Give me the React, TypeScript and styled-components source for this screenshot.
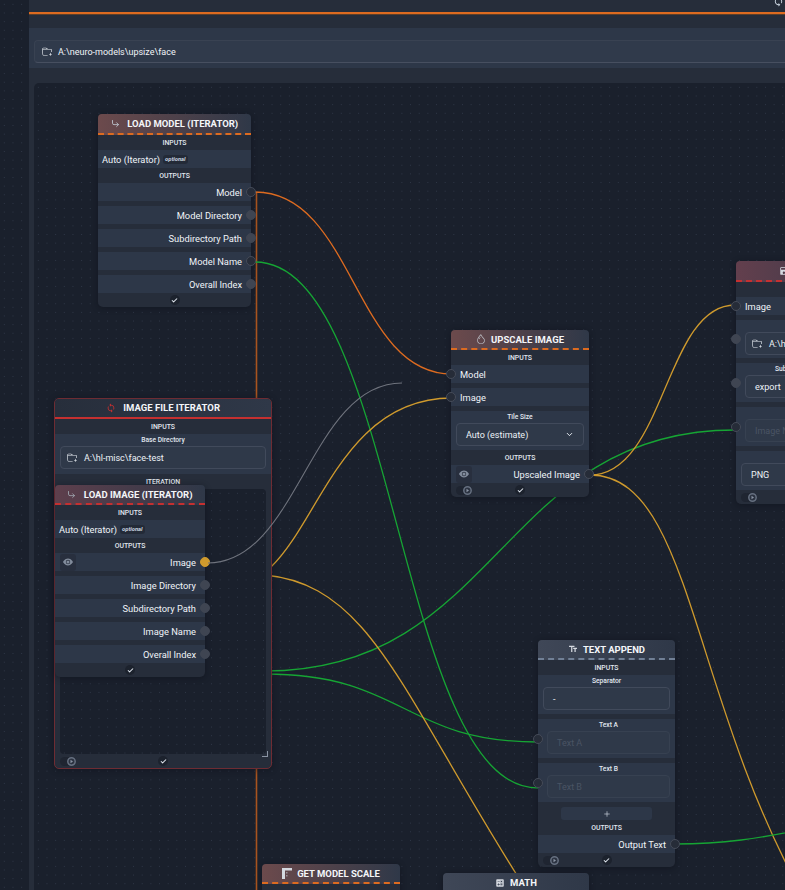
import React from "react";
import styled, { createGlobalStyle } from "styled-components";
import { BsEyeFill, BsFolderPlus, BsDroplet } from "react-icons/bs";
import { MdCalculate, MdLoop, MdSave, MdTextFields } from "react-icons/md";
import { Check, ChevronDown, CornerDownRight, Plus } from "lucide-react";

const ORANGE = "#dd6b20";
const RED = "#c53030";
const SLATE = "#718096";
const YELLOW = "#cf9a2d";
const GREEN = "#16a534";
const dots = "radial-gradient(circle at center, #2f3747 0.6px, transparent 0.9px)";

const GlobalStyle = createGlobalStyle`
  html, body { margin: 0; height: 100%; overflow: hidden; }
  body {
    background-color: #1a202c;
    background-image: ${dots};
    background-size: 8.66px 8.66px;
    font-family: Roboto, "Liberation Sans", sans-serif;
    color: #f0f4f8;
  }
`;

const Page = styled.div`
  height: 890px;
  width: 785px;
  padding-left: 29px;
  box-sizing: border-box;
  overflow: hidden;
`;

const OuterNode = styled.div`
  width: 756px;
  height: 890px;
  display: flex;
  flex-direction: column;
  background: #262d3a;
`;

const OuterTop = styled.div`
  height: 12px;
  overflow: hidden;
  display: flex;
  justify-content: flex-end;
  padding-right: 1px;
  color: #cbd5e0;
  svg { margin-top: -4px; }
`;

const OuterAccent = styled.div`
  height: 3px;
  box-sizing: border-box;
  background: ${ORANGE};
  border-bottom: 1px solid #5a3f2c;
`;

const OuterInputs = styled.div`
  margin-top: 13px;
  height: 40px;
  padding: 12px 0 5px 5px;
  box-sizing: border-box;
  background: #2d3748;
`;

const OuterGap = styled.div`
  height: 15px;
`;

const Canvas = styled.div`
  position: relative;
  flex: 1;
  margin-left: 5px;
  overflow: hidden;
  border-radius: 5px 0 0 0;
  background-color: #1a202c;
  background-image: ${dots};
  background-size: 8.66px 8.66px;
`;

const WireLayer = styled.svg<{ $top?: boolean }>`
  position: absolute;
  inset: 0;
  width: 100%;
  height: 100%;
  z-index: ${(p) => (p.$top ? 3 : 0)};
  pointer-events: none;
`;

const Wire = styled.path<{ $color: string; $width?: number }>`
  fill: none;
  stroke: ${(p) => p.$color};
  stroke-width: ${(p) => p.$width ?? 1.3};
`;

const NodeShell = styled.div<{ $x: number; $y: number; $w: number; $h?: number }>`
  position: absolute;
  left: ${(p) => p.$x}px;
  top: ${(p) => p.$y}px;
  width: ${(p) => p.$w}px;
  ${(p) => (p.$h ? `height: ${p.$h}px;` : "")}
  z-index: 1;
  display: flex;
  flex-direction: column;
  box-sizing: border-box;
  background: #262d3a;
  border-radius: 5px;
  box-shadow: 0 1px 6px rgba(10, 14, 22, 0.45);
`;

const IteratorShell = styled(NodeShell)`
  border: 1px solid #6e2c33;
`;

const Header = styled.div<{ $tint: string; $accent: string; $solid?: boolean; $h?: number }>`
  height: ${(p) => p.$h ?? 20}px;
  flex: none;
  box-sizing: border-box;
  display: flex;
  align-items: center;
  justify-content: center;
  gap: 5px;
  padding-bottom: ${(p) => (p.$solid ? 1 : 0)}px;
  border-radius: 4px 4px 0 0;
  background: linear-gradient(90deg, ${(p) => p.$tint}, #2f3848);
  border-bottom: 2px ${(p) => (p.$solid ? "solid" : "dashed")} ${(p) => p.$accent};
  font-size: 9.5px;
  font-weight: 700;
  white-space: nowrap;
  color: #f4f6f9;
  svg { flex: none; }
`;

const SectionLabel = styled.div`
  height: 15px;
  flex: none;
  display: flex;
  align-items: center;
  justify-content: center;
  font-size: 6.9px;
  font-weight: 500;
  color: #e2e8f0;
`;

const Rows = styled.div`
  display: flex;
  flex-direction: column;
  gap: 5px;
`;

const HandleRow = styled.div<{ $align?: "left" | "right" }>`
  position: relative;
  height: 18px;
  display: flex;
  align-items: center;
  justify-content: ${(p) => (p.$align === "right" ? "flex-end" : "flex-start")};
  padding: 0 ${(p) => (p.$align === "right" ? 9 : 4)}px 0 ${(p) => (p.$align === "right" ? 5 : 9)}px;
  background: #2d3748;
  font-size: 9.3px;
  white-space: nowrap;
`;

const PlainRow = styled(HandleRow)`
  padding: 0 0 0 4px;
  gap: 3px;
`;

const FieldRow = styled.div<{ $pad?: number; $h?: number }>`
  position: relative;
  height: ${(p) => p.$h ?? 39}px;
  display: flex;
  flex-direction: column;
  padding: 0 5px 0 ${(p) => p.$pad ?? 5}px;
  box-sizing: border-box;
  background: #2d3748;
`;

const FieldLabel = styled.div`
  height: 12px;
  flex: none;
  display: flex;
  align-items: center;
  justify-content: center;
  gap: 4px;
  font-size: 6.7px;
  font-weight: 500;
  white-space: nowrap;
  color: #e2e8f0;
`;

const TextField = styled.div<{ $dim?: boolean }>`
  height: 23px;
  flex: none;
  box-sizing: border-box;
  display: flex;
  align-items: center;
  gap: 7px;
  padding: 0 9px;
  border: 1px solid ${(p) => (p.$dim ? "#374151" : "#414a5b")};
  border-radius: 4px;
  font-size: 9px;
  white-space: nowrap;
  overflow: hidden;
  background: #2f3949;
  color: ${(p) => (p.$dim ? "#4a5464" : "#edf2f7")};
  svg { flex: none; }
`;

const FolderField = styled(TextField)`
  padding: 0 6px;
`;

const PathBar = styled(TextField)`
  border-radius: 4px 0 0 4px;
  border-width: 1px 0 1px 1px;
  border-color: #394252 #394252 #474f60;
  padding-left: 7px;
  gap: 6px;
  background: #303a4b;
  color: #f0f4f8;
`;

const SelectField = styled(TextField)`
  justify-content: space-between;
  color: #edf2f7;
`;

const Port = styled.span<{ $side: "left" | "right"; $state?: "free" | "linked" | "image" }>`
  position: absolute;
  ${(p) => p.$side}: -5px;
  top: 50%;
  width: 10px;
  height: 10px;
  margin-top: -5px;
  box-sizing: border-box;
  border-radius: 50%;
  background: ${(p) => (p.$state === "image" ? YELLOW : p.$state === "linked" ? "#262c38" : "#3f4552")};
  border: 1px solid ${(p) => (p.$state === "image" ? YELLOW : p.$state === "linked" ? "#454b58" : "#3f4552")};
`;

const OptionalTag = styled.span`
  display: inline-flex;
  align-items: center;
  height: 9px;
  padding: 0 2px;
  border-radius: 3px;
  background: #232a37;
  font-size: 5.8px;
  font-style: italic;
  font-weight: 700;
  color: #cbd5e0;
`;

const EyeButton = styled.span`
  width: 16px;
  height: 17px;
  margin-right: auto;
  display: flex;
  align-items: center;
  justify-content: center;
  border-radius: 3px;
  background: #282f3e;
  color: #828c9c;
`;

const Footer = styled.div<{ $h?: number }>`
  height: ${(p) => p.$h ?? 14}px;
  flex: none;
  display: grid;
  grid-template-columns: 1fr auto 1fr;
  align-items: center;
  padding: 0 5px;
`;

const PlayToggle = styled.span`
  width: 16px;
  height: 9px;
  display: flex;
  align-items: center;
  justify-content: flex-end;
  border-radius: 5px;
  background: #1f2531;
`;

const CheckBadge = styled.span`
  grid-column: 2;
  width: 10px;
  height: 10px;
  display: flex;
  align-items: center;
  justify-content: center;
  border-radius: 50%;
  background: #1c222d;
  color: #e2e8f0;
`;

const InnerCanvas = styled.div`
  position: relative;
  flex: 1;
  margin: 0 5px 0 5px;
  border-radius: 4px;
  background-color: #1a202c;
  background-image: ${dots};
  background-size: 8.66px 8.66px;
`;

const ResizeCorner = styled.span`
  position: absolute;
  right: -2px;
  bottom: -3px;
  width: 5px;
  height: 5px;
  border-right: 1px solid #8a93a3;
  border-bottom: 1px solid #8a93a3;
`;

const NestedNode = styled(NodeShell)`
  z-index: 2;
`;

const AddButton = styled.div`
  height: 13px;
  margin: 5px 23px 0;
  display: flex;
  align-items: center;
  justify-content: center;
  border-radius: 3px;
  background: #2d3748;
  color: #cbd5e0;
`;

const PlayIcon = () => (
  <svg width="9" height="9" viewBox="0 0 9 9">
    <circle cx="4.5" cy="4.5" r="3.7" fill="#2b3240" stroke="#667080" strokeWidth="1.5" />
    <path d="M3.5 2.8 6 4.5 3.5 6.2z" fill="#8a94a3" />
  </svg>
);

const ScaleIcon = () => (
  <svg width="10" height="11" viewBox="0 0 10 11" fill="#d5d9e0">
    <path d="M0 0h10v2.5H3V11H0z" />
    <path d="M4 4h1.5v1.5H4zM4 7h1.5v1.5H4z" opacity="0.5" />
  </svg>
);

const NodeFooter = ({ play = true }: { play?: boolean }) => (
  <Footer>
    {play && (
      <PlayToggle>
        <PlayIcon />
      </PlayToggle>
    )}
    <CheckBadge>
      <Check size={7} strokeWidth={3.5} />
    </CheckBadge>
  </Footer>
);

const Output = ({ label, linked }: { label: string; linked?: boolean }) => (
  <HandleRow $align="right">
    {label}
    <Port $side="right" $state={linked ? "linked" : "free"} />
  </HandleRow>
);

const Eye = () => (
  <EyeButton>
    <BsEyeFill size={10} />
  </EyeButton>
);

const wires = [
  { d: "M256.5 192 V890", color: "#a8541f", width: 1.6 },
  { d: "M255 192 C354 192 354 374 452 374", color: ORANGE },
  { d: "M255 262 C397 262 397 788 538 788", color: GREEN },
  { d: "M271 567 C320 520 345 398 452 398", color: YELLOW },
  { d: "M265 671 C500 671 500 430 735 430", color: GREEN },
  { d: "M265 674 C404 674 404 742 538 742", color: GREEN },
  { d: "M265 575 C370 585 400 690 520 880", color: YELLOW },
  { d: "M590 475 C665 475 665 305 735 305", color: YELLOW },
  { d: "M590 475 C690 475 690 690 800 890", color: YELLOW },
  { d: "M675 844 C725 844 760 838 800 830", color: GREEN },
];

export default function App() {
  return (
    <Page>
      <GlobalStyle />
      <OuterNode>
        <OuterTop>
          <MdLoop size={11} />
        </OuterTop>
        <OuterAccent />
        <OuterInputs>
          <PathBar>
            <BsFolderPlus size={10} />
            A:\neuro-models\upsize\face
          </PathBar>
        </OuterInputs>
        <OuterGap />
        <Canvas>
          <WireLayer viewBox="34 83 751 807">
            {wires.map((w) => (
              <Wire key={w.d} d={w.d} $color={w.color} $width={w.width} />
            ))}
          </WireLayer>
          <WireLayer $top viewBox="34 83 751 807">
            <Wire d="M208 563 C298 563 310 383 402 383" $color="#6f737d" $width={1.1} />
          </WireLayer>

          <NodeShell $x={64} $y={31} $w={153}>
            <Header $tint="#6c4a4c" $accent={ORANGE} $h={21}>
              <CornerDownRight size={9} color="#b8bcc4" strokeWidth={2.5} />
              &nbsp;LOAD MODEL (ITERATOR)
            </Header>
            <SectionLabel>INPUTS</SectionLabel>
            <PlainRow>
              Auto (Iterator) <OptionalTag>optional</OptionalTag>
            </PlainRow>
            <SectionLabel>OUTPUTS</SectionLabel>
            <Rows>
              <Output label="Model" linked />
              <Output label="Model Directory" />
              <Output label="Subdirectory Path" />
              <Output label="Model Name" linked />
              <Output label="Overall Index" />
            </Rows>
            <NodeFooter play={false} />
          </NodeShell>

          <IteratorShell $x={20} $y={315} $w={218} $h={371}>
            <Header $tint="#272e3b" $accent={RED} $solid>
              <MdLoop size={10} color="#c53030" />
              &nbsp;IMAGE FILE ITERATOR
            </Header>
            <SectionLabel>INPUTS</SectionLabel>
            <FieldRow $h={40}>
              <FieldLabel>Base Directory</FieldLabel>
              <FolderField>
                <BsFolderPlus size={10} />
                A:\hl-misc\face-test
              </FolderField>
            </FieldRow>
            <SectionLabel>ITERATION</SectionLabel>
            <InnerCanvas>
              <NestedNode $x={-5} $y={-4} $w={150}>
                <Header $tint="#5e3f4c" $accent={RED}>
                  <CornerDownRight size={9} color="#9a9ea8" strokeWidth={2.5} />
                  &nbsp;LOAD IMAGE (ITERATOR)
                </Header>
                <SectionLabel>INPUTS</SectionLabel>
                <PlainRow>
                  Auto (Iterator) <OptionalTag>optional</OptionalTag>
                </PlainRow>
                <SectionLabel>OUTPUTS</SectionLabel>
                <Rows>
                  <HandleRow $align="right">
                    <Eye />
                    Image
                    <Port $side="right" $state="image" />
                  </HandleRow>
                  <Output label="Image Directory" />
                  <Output label="Subdirectory Path" />
                  <Output label="Image Name" />
                  <Output label="Overall Index" />
                </Rows>
                <NodeFooter play={false} />
              </NestedNode>
              <ResizeCorner />
            </InnerCanvas>
            <NodeFooter />
          </IteratorShell>

          <NodeShell $x={417} $y={247} $w={138}>
            <Header $tint="#6c4a4c" $accent={ORANGE}>
              <BsDroplet size={10} color="#c3c7ce" />
              UPSCALE IMAGE
            </Header>
            <SectionLabel>INPUTS</SectionLabel>
            <Rows>
              <HandleRow>
                Model
                <Port $side="left" $state="linked" />
              </HandleRow>
              <HandleRow>
                Image
                <Port $side="left" $state="linked" />
              </HandleRow>
              <FieldRow>
                <FieldLabel>Tile Size</FieldLabel>
                <SelectField>
                  Auto (estimate)
                  <ChevronDown size={9} strokeWidth={2.5} />
                </SelectField>
              </FieldRow>
            </Rows>
            <SectionLabel>OUTPUTS</SectionLabel>
            <HandleRow $align="right">
              <Eye />
              Upscaled Image
              <Port $side="right" $state="linked" />
            </HandleRow>
            <NodeFooter />
          </NodeShell>

          <NodeShell $x={702} $y={178} $w={156}>
            <Header $tint="#633f4d" $accent={RED} $h={21}>
              <MdSave size={10} color="#d5d9e0" />
              SAVE IMAGE
            </Header>
            <SectionLabel>INPUTS</SectionLabel>
            <Rows>
              <HandleRow>
                Image
                <Port $side="left" $state="linked" />
              </HandleRow>
              <FieldRow $pad={9} $h={38}>
                <FieldLabel>Base Directory</FieldLabel>
                <FolderField>
                  <BsFolderPlus size={10} />
                  A:\hl-misc\output
                </FolderField>
                <Port $side="left" />
              </FieldRow>
              <FieldRow $pad={9}>
                <FieldLabel>
                  Subdirectory Path <OptionalTag>optional</OptionalTag>
                </FieldLabel>
                <TextField>export</TextField>
                <Port $side="left" />
              </FieldRow>
              <FieldRow $pad={9}>
                <FieldLabel />
                <TextField $dim>Image Name</TextField>
                <Port $side="left" $state="linked" />
              </FieldRow>
              <FieldRow>
                <FieldLabel />
                <SelectField>
                  PNG
                  <ChevronDown size={9} strokeWidth={2.5} />
                </SelectField>
              </FieldRow>
            </Rows>
            <NodeFooter />
          </NodeShell>

          <NodeShell $x={504} $y={557} $w={137}>
            <Header $tint="#3f4757" $accent={SLATE}>
              <MdTextFields size={10} color="#d5d9e0" />
              TEXT APPEND
            </Header>
            <SectionLabel>INPUTS</SectionLabel>
            <Rows>
              <FieldRow>
                <FieldLabel>Separator</FieldLabel>
                <TextField>-</TextField>
              </FieldRow>
              <FieldRow $pad={9}>
                <FieldLabel>Text A</FieldLabel>
                <TextField $dim>Text A</TextField>
                <Port $side="left" $state="linked" />
              </FieldRow>
              <FieldRow $pad={9}>
                <FieldLabel>Text B</FieldLabel>
                <TextField $dim>Text B</TextField>
                <Port $side="left" $state="linked" />
              </FieldRow>
            </Rows>
            <AddButton>
              <Plus size={8} />
            </AddButton>
            <SectionLabel>OUTPUTS</SectionLabel>
            <Output label="Output Text" linked />
            <NodeFooter />
          </NodeShell>

          <NodeShell $x={228} $y={781} $w={138} $h={40}>
            <Header $tint="#6c4a4c" $accent={ORANGE}>
              <ScaleIcon />
              GET MODEL SCALE
            </Header>
          </NodeShell>

          <NodeShell $x={409} $y={790} $w={146} $h={40}>
            <Header $tint="#3f4757" $accent={SLATE} $h={21}>
              <MdCalculate size={10} color="#d5d9e0" />
              MATH
            </Header>
          </NodeShell>
        </Canvas>
      </OuterNode>
    </Page>
  );
}
